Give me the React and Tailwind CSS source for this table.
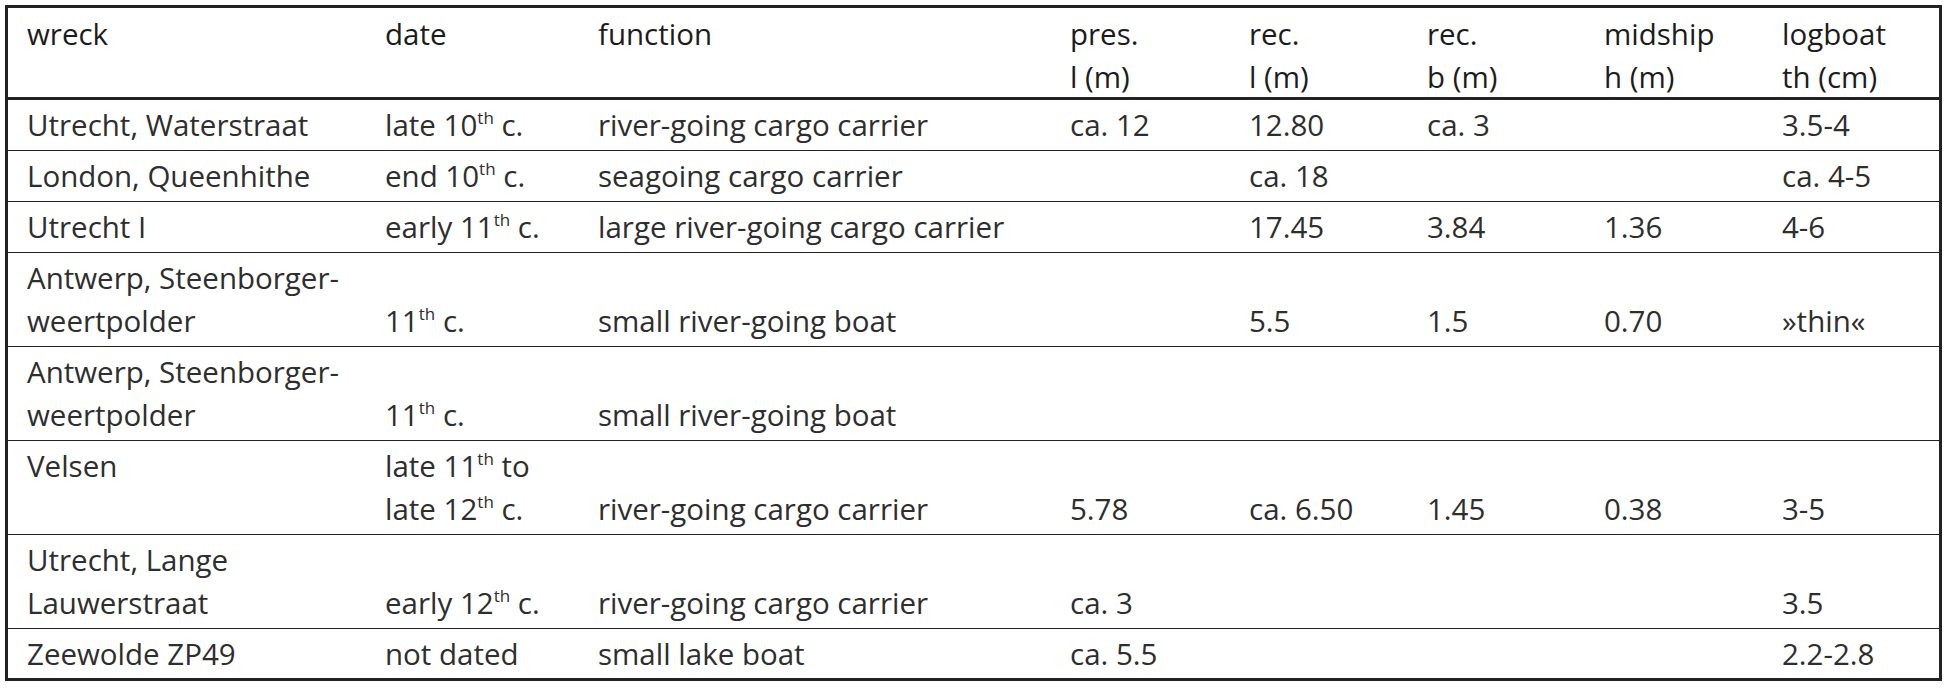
import React from "react";

const Th = ({ children }) => (
  <span className="relative -top-[12px] text-[17px] leading-none">{children}</span>
);

const cols = "grid grid-cols-[358px_213px_472px_179px_178px_177px_178px_176px]";

const header = [
  ["wreck"],
  ["date"],
  ["function"],
  ["pres.", "l (m)"],
  ["rec.", "l (m)"],
  ["rec.", "b (m)"],
  ["midship", "h (m)"],
  ["logboat", "th (cm)"],
];

const rows = [
  {
    h: "single",
    cells: [
      "Utrecht, Waterstraat",
      <>late 10<Th>th</Th> c.</>,
      "river-going cargo carrier",
      "ca. 12",
      "12.80",
      "ca. 3",
      "",
      "3.5-4",
    ],
  },
  {
    h: "single",
    cells: [
      "London, Queenhithe",
      <>end 10<Th>th</Th> c.</>,
      "seagoing cargo carrier",
      "",
      "ca. 18",
      "",
      "",
      "ca. 4-5",
    ],
  },
  {
    h: "single",
    cells: [
      "Utrecht I",
      <>early 11<Th>th</Th> c.</>,
      "large river-going cargo carrier",
      "",
      "17.45",
      "3.84",
      "1.36",
      "4-6",
    ],
  },
  {
    h: "double",
    cells: [
      <>Antwerp, Steenborger-<br />weertpolder</>,
      <>11<Th>th</Th> c.</>,
      "small river-going boat",
      "",
      "5.5",
      "1.5",
      "0.70",
      "»thin«",
    ],
  },
  {
    h: "double",
    cells: [
      <>Antwerp, Steenborger-<br />weertpolder</>,
      <>11<Th>th</Th> c.</>,
      "small river-going boat",
      "",
      "",
      "",
      "",
      "",
    ],
  },
  {
    h: "double",
    cells: [
      "Velsen",
      <>late 11<Th>th</Th> to<br />late 12<Th>th</Th> c.</>,
      "river-going cargo carrier",
      "5.78",
      "ca. 6.50",
      "1.45",
      "0.38",
      "3-5",
    ],
  },
  {
    h: "double",
    cells: [
      <>Utrecht, Lange<br />Lauwerstraat</>,
      <>early 12<Th>th</Th> c.</>,
      "river-going cargo carrier",
      "ca. 3",
      "",
      "",
      "",
      "3.5",
    ],
  },
  {
    h: "last",
    cells: [
      "Zeewolde ZP49",
      "not dated",
      "small lake boat",
      "ca. 5.5",
      "",
      "",
      "",
      "2.2-2.8",
    ],
  },
];

export default function App() {
  return (
    <div className="min-h-screen bg-white pl-[5px] pt-[5px] font-['Open_Sans',sans-serif] text-[29.5px] leading-[43px]">
      <div className="w-[1937px] border-[3px] border-[#222]">
        <div className={`${cols} h-[92px] border-b-[3px] border-[#222] text-[#1c1c1c]`}>
          {header.map((c, i) => (
            <div key={i} className="pl-[19px] pt-[4px] whitespace-nowrap">
              {c.map((t, j) => (
                <div key={j}>{t}</div>
              ))}
            </div>
          ))}
        </div>
        {rows.map((r, ri) => (
          <div
            key={ri}
            className={`${cols} items-end text-[#2e2e2e] ${
              r.h === "double"
                ? "h-[94px] border-b border-[#222]"
                : r.h === "last"
                ? "h-[49px]"
                : "h-[51px] border-b border-[#222]"
            }`}
          >
            {r.cells.map((c, ci) => (
              <div
                key={ci}
                className={`pl-[19px] pb-[4px] whitespace-nowrap ${
                  ci === 0 ? "self-start pt-[3px]" : ""
                }`}
              >
                {c}
              </div>
            ))}
          </div>
        ))}
      </div>
    </div>
  );
}
